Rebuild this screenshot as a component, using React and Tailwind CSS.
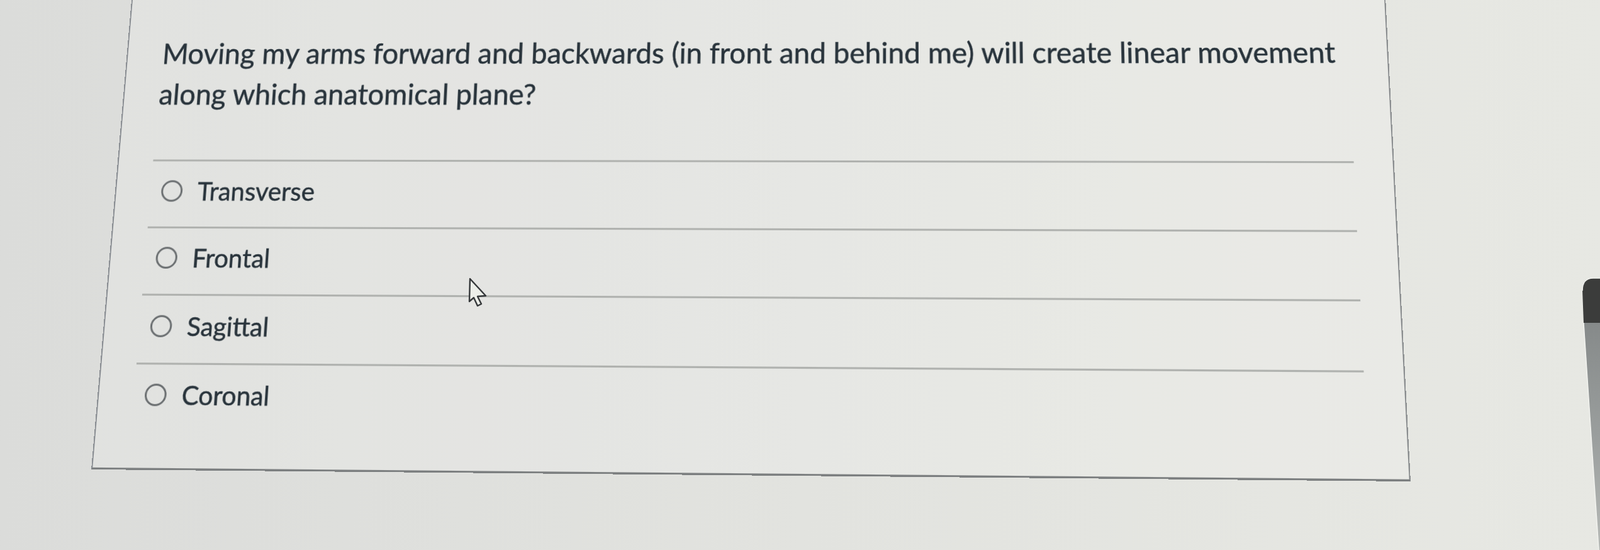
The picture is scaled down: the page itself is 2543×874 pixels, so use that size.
import React from "react";

const options = ["Transverse", "Frontal", "Sagittal", "Coronal"];

function Cursor() {
  return (
    <svg
      className="absolute left-[744px] top-[441px]"
      width="32"
      height="48"
      viewBox="0 0 32 48"
    >
      <path
        d="M3 2 L2 38 L9 32 L15 45 L21 42 L15 30 L28 29 Z"
        fill="#eceee9"
        stroke="#35383a"
        strokeWidth="2.4"
        strokeLinejoin="round"
      />
    </svg>
  );
}

function EdgeObject() {
  return (
    <svg
      className="absolute left-[2510px] top-[440px]"
      width="33"
      height="434"
      viewBox="0 0 33 434"
    >
      <defs>
        <linearGradient id="edgeGray" x1="0" y1="0" x2="0" y2="1">
          <stop offset="0" stopColor="#868a8a" />
          <stop offset="0.5" stopColor="#9a9e9d" />
          <stop offset="1" stopColor="#b7bab7" />
        </linearGradient>
      </defs>
      <path d="M7 73 L33 73 L33 434 L31 434 Z" fill="url(#edgeGray)" />
      <path d="M7 73 L31 434" stroke="#f2f3ef" strokeWidth="1.5" />
      <path d="M22 2 L33 2 L33 73 L7 73 L5 20 Q5 2 22 2 Z" fill="#3b3c3b" />
      <path d="M5 22 Q5 2 22 2 L33 2" fill="none" stroke="#f2f3ef" strokeWidth="1.5" />
    </svg>
  );
}

export default function App() {
  return (
    <div className="relative w-full h-[874px] overflow-hidden bg-linear-to-r from-[#dbdcda] via-[#e2e3df] to-[#e7e8e3] font-['Lato',sans-serif] text-[#28333b]">
      <div className="w-[1993px] h-[738px] [transform-origin:0_0] [transform:matrix3d(0.966899,-0.0024335,0,-0.000015032,-0.096352,0.961286,0,-0.000066427,0,0,1,0,209,0,0,1)] border-l-2 border-r-2 border-b-[3px] border-l-[#8a8e93] border-r-[#8a8d8f] border-b-[#7c7f80] bg-white/15 flex flex-col">
        <p className="pl-[56px] pt-[55px] text-[45.5px] leading-[66px] whitespace-nowrap [-webkit-text-stroke:0.5px_#28333b]">
          Moving my arms forward and backwards (in front and behind me) will create linear movement
          <br />
          along which anatomical plane?
        </p>
        <div className="mt-[72px] ml-[55px] mr-[59px] flex flex-col">
          {options.map((o) => (
            <div
              key={o}
              className="h-[105.5px] border-t-[3px] border-[#b0b2af] flex items-center pb-[9px] pl-[17px] gap-[24px]"
            >
              <span className="w-[34px] h-[34px] rounded-full border-[3.5px] border-[#6b6f71] shrink-0" />
              <span className="text-[40px] leading-[48px] [-webkit-text-stroke:0.5px_#28333b]">{o}</span>
            </div>
          ))}
        </div>
      </div>
      <Cursor />
      <EdgeObject />
    </div>
  );
}
